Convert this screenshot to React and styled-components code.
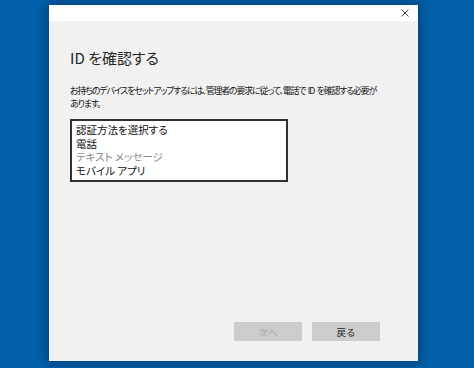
import React from 'react'
import styled, { createGlobalStyle } from 'styled-components'

const GlobalStyle = createGlobalStyle`
  html, body {
    margin: 0;
    padding: 0;
    background: #0361ab;
    font-family: 'Noto Sans CJK JP', 'Noto Sans', sans-serif;
  }
`

const Desktop = styled.div`
  width: 474px;
  height: 368px;
  overflow: hidden;
  padding: 5px 0 0 49px;
  box-sizing: border-box;
  background: #0361ab;
`

const Dialog = styled.div`
  width: 369px;
  height: 356px;
  display: flex;
  flex-direction: column;
  background: #f1f1f1;
  box-shadow: 0 0 10px 3px rgba(0, 30, 70, 0.45);
`

const TitleBar = styled.div`
  height: 16px;
  background: #ffffff;
  display: flex;
  justify-content: flex-end;
  align-items: center;
  padding-right: 9px;
`

const CloseButton = styled.span`
  width: 8px;
  height: 8px;
  display: flex;
  color: #444;
`

const Content = styled.div`
  flex: 1;
  display: flex;
  flex-direction: column;
  padding: 27px 38px 20px 21px;
`

const Title = styled.h1`
  margin: 0;
  font-size: 15px;
  font-weight: 400;
  color: #262626;
  line-height: 20px;
  font-feature-settings: 'palt';
`

const Message = styled.p`
  margin: 17px 0 0;
  font-size: 8.9px;
  line-height: 12.5px;
  letter-spacing: -1.1px;
  word-spacing: 1.5px;
  white-space: nowrap;
  color: #111;
  font-feature-settings: 'palt';
`

const ListBox = styled.div`
  margin-top: 9px;
  width: 218px;
  box-sizing: border-box;
  border: 2px solid #303030;
  background: #ffffff;
  padding: 2px 0 3px 4px;
  display: flex;
  flex-direction: column;
`

const Option = styled.div`
  font-size: 10.5px;
  line-height: 13.5px;
  color: ${(p) => (p.disabled ? '#8a8a8a' : '#111')};
  font-feature-settings: 'palt';
`

const Footer = styled.div`
  margin-top: auto;
  display: flex;
  justify-content: flex-end;
  gap: 10px;
`

const Button = styled.button`
  width: 68px;
  height: 19px;
  border: none;
  background: #cccccc;
  font-family: inherit;
  font-size: 9.5px;
  color: ${(p) => (p.disabled ? '#a8a8a8' : '#222')};
  padding: 0;
`

const options = [
  { label: '認証方法を選択する' },
  { label: '電話' },
  { label: 'テキスト メッセージ', disabled: true },
  { label: 'モバイル アプリ' },
]

export default function App() {
  return (
    <>
      <GlobalStyle />
      <Desktop>
        <Dialog>
          <TitleBar>
            <CloseButton>
              <svg width="8" height="8" viewBox="0 0 8 8">
                <path d="M0.5 0.5 L7.5 7.5 M7.5 0.5 L0.5 7.5" stroke="currentColor" strokeWidth="1" />
              </svg>
            </CloseButton>
          </TitleBar>
          <Content>
            <Title>ID を確認する</Title>
            <Message>
              お持ちのデバイスをセットアップするには、管理者の要求に従って、電話で ID を確認する必要が
              <br />
              あります。
            </Message>
            <ListBox>
              {options.map((o, i) => (
                <Option key={i} disabled={o.disabled}>
                  {o.label}
                </Option>
              ))}
            </ListBox>
            <Footer>
              <Button disabled>次へ</Button>
              <Button>戻る</Button>
            </Footer>
          </Content>
        </Dialog>
      </Desktop>
    </>
  )
}
